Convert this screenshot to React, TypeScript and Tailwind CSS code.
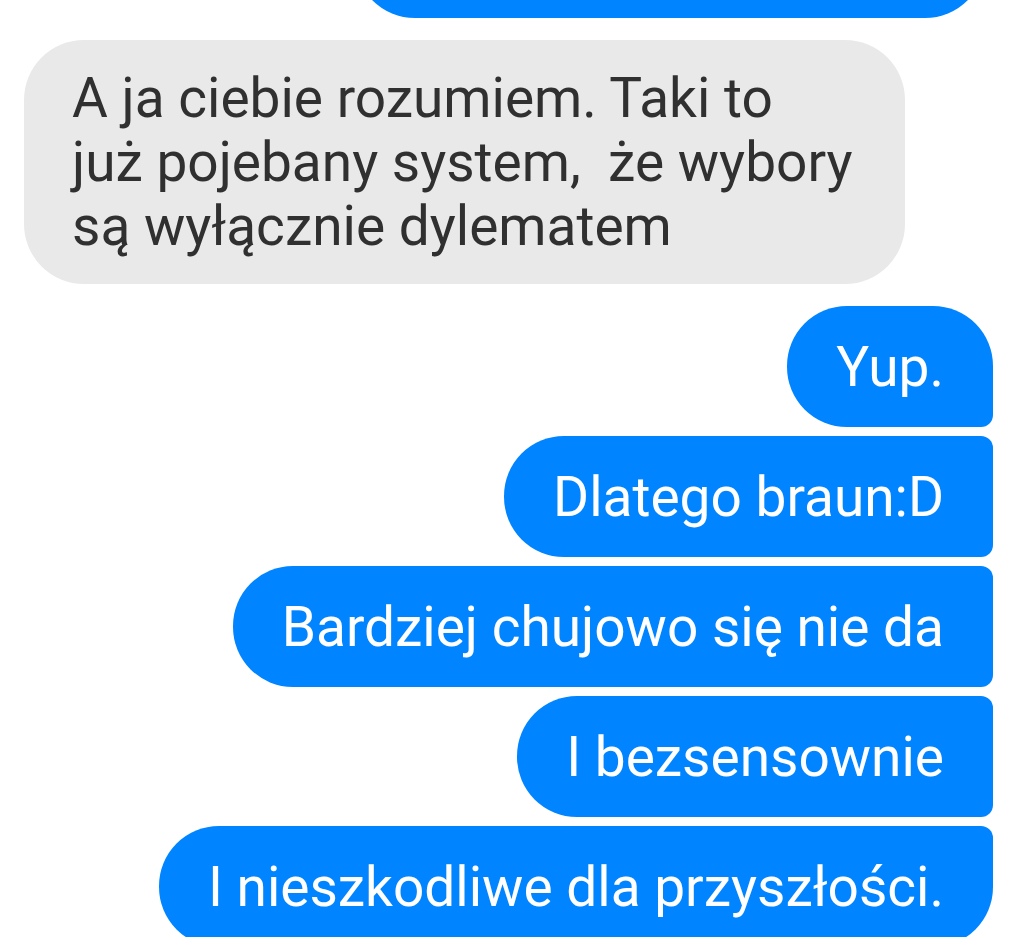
const font = { fontFamily: 'Roboto, "Noto Sans", sans-serif' }

const MINE = [
  { text: 'Yup.', corners: 'rounded-tl-[60px] rounded-tr-[60px] rounded-br-[12px] rounded-bl-[60px]' },
  { text: 'Dlatego braun:D', corners: 'rounded-l-[60px] rounded-r-[12px]' },
  { text: 'Bardziej chujowo się nie da', corners: 'rounded-l-[60px] rounded-r-[12px]' },
  { text: 'I bezsensownie', corners: 'rounded-l-[60px] rounded-r-[12px]' },
  { text: 'I nieszkodliwe dla przyszłości.', corners: 'rounded-l-[60px] rounded-tr-[12px] rounded-br-[60px]' },
]

export default function App() {
  return (
    <div className="w-[1024px] h-[937px] overflow-hidden bg-white" style={font}>
      <div className="flex flex-col">
        <div className="self-start ml-[355px] w-[630px] h-[121px] -mt-[103px] bg-[#0084ff] rounded-[60px]" />

        <div className="self-start ml-[24px] mt-[22px] w-[881px] bg-[#e9e9e9] rounded-[60px] px-[48px] py-[26px] text-[55px] leading-[64px] text-[#303030] whitespace-pre">
          <div>A ja ciebie rozumiem. Taki to</div>
          <div>już pojebany system,  że wybory</div>
          <div>są wyłącznie dylematem</div>
        </div>

        <div className="flex flex-col items-end pr-[31px] mt-[22px] gap-[9px]">
          {MINE.map((m, i) => (
            <div
              key={i}
              className={`h-[121px] flex items-center bg-[#0084ff] text-white px-[49px] text-[55px] leading-[64px] whitespace-nowrap ${m.corners}`}
            >
              {m.text}
            </div>
          ))}
        </div>
      </div>
    </div>
  )
}
